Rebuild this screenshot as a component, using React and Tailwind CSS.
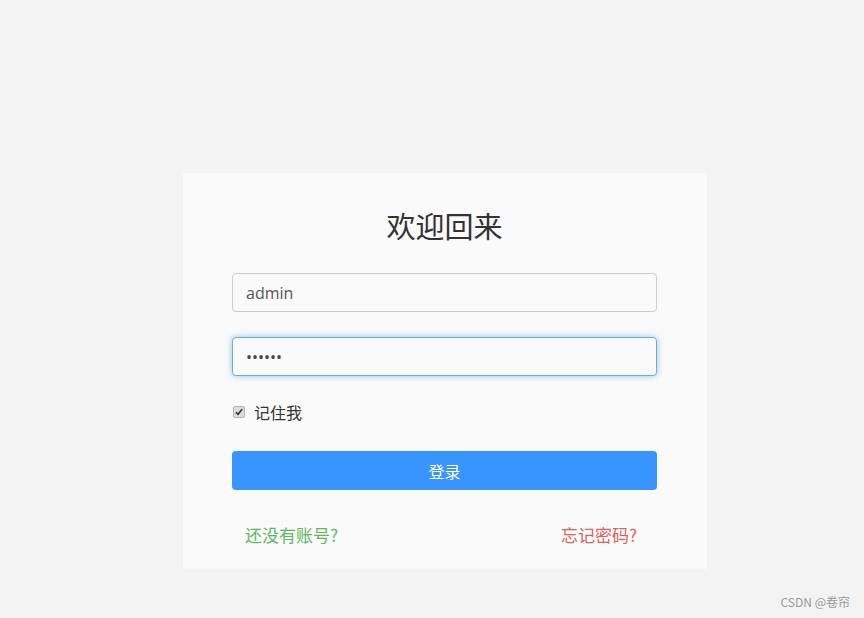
import React from "react";

const cjk = { fontFamily: '"Microsoft YaHei", "Noto Sans CJK SC", "Noto Sans", sans-serif' };

const App = () => {
  return (
    <div className="w-[864px] h-[618px] bg-[#f3f3f3] relative overflow-hidden" style={cjk}>
      <div className="pt-[173px] pl-[183px]">
        <div className="w-[524px] h-[396px] bg-[#fafafa] pl-[49px] pr-[50px] pt-[32px] flex flex-col">
          <h2 className="text-center text-[29px] leading-[40px] text-[#333] font-normal">欢迎回来</h2>

          <input
            readOnly
            value="admin"
            className="mt-[28px] h-[39px] w-full rounded-[4px] border border-[#ccc] bg-[#fafafa] px-[13px] text-[16px] text-[#555] outline-none"
            style={{ fontFamily: '"Open Sans", "Noto Sans", sans-serif' }}
          />
          <input
            readOnly
            value="••••••"
            className="mt-[25px] h-[39px] w-full rounded-[4px] border border-[#66afe9] bg-[#fafafa] px-[13px] text-[16px] text-[#444] outline-none shadow-[0_0_6px_rgba(102,175,233,0.7)]"
            style={{ fontFamily: '"Open Sans", "Noto Sans", sans-serif' }}
          />

          <label className="mt-[25px] flex items-center gap-[9px] h-[22px]">
            <span className="ml-[1px] flex h-[12px] w-[12px] items-center justify-center rounded-[2px] border border-[#b5b5b5] bg-[#dcdcdc]">
              <svg viewBox="0 0 12 12" className="h-[10px] w-[10px]">
                <path d="M2.2 6.3 L4.8 8.8 L9.8 2.8" fill="none" stroke="#333" strokeWidth="2" />
              </svg>
            </span>
            <span className="text-[16px] text-[#333]">记住我</span>
          </label>

          <button className="mt-[28px] h-[39px] w-full rounded-[4px] bg-[#3894ff] text-[16px] text-white">
            登录
          </button>

          <div className="mt-[32px] flex justify-between pl-[13px] pr-[20px] text-[17px]">
            <a className="text-[#5fb760]">还没有账号?</a>
            <a className="text-[#dd5f66]">忘记密码?</a>
          </div>
        </div>
      </div>

      <div className="absolute right-[14px] bottom-[7px] text-[12px] text-[#999]">CSDN @卷帘</div>
    </div>
  );
};

export default App;
